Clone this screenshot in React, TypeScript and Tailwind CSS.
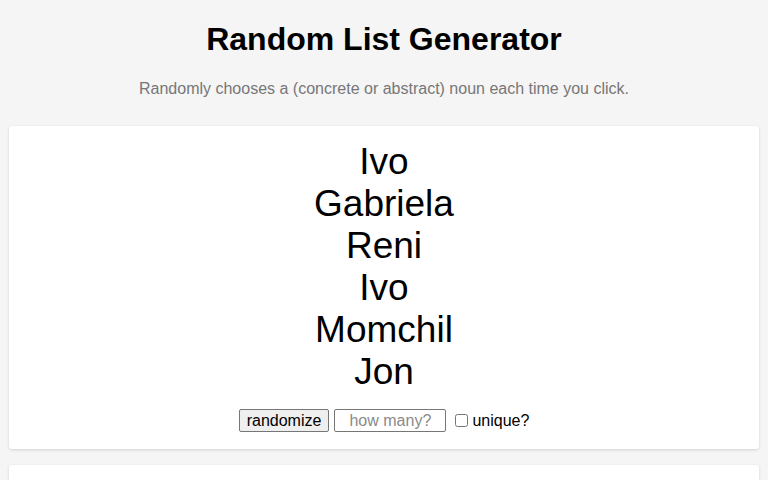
import React from "react";

export default function App() {
  const names = ["Ivo", "Gabriela", "Reni", "Ivo", "Momchil", "Jon"];
  return (
    <div className="h-[480px] overflow-hidden bg-[#f5f5f5] font-['Liberation_Sans',Arial,sans-serif] text-black">
      <h1 className="pt-[21px] text-center text-[32px] leading-[37px] font-bold">Random List Generator</h1>
      <p className="mt-[22px] text-center text-[16px] leading-[18px] text-[#777777]">
        Randomly chooses a (concrete or abstract) noun each time you click.
      </p>
      <div className="mx-[9px] mt-[28px] flex flex-col items-center rounded-[3px] bg-white pt-[15px] pb-[17px] shadow-[0_1px_3px_rgba(0,0,0,0.15)]">
        <div className="flex flex-col items-center">
          {names.map((n, i) => (
            <div key={i} className="text-[37px] leading-[42px]">
              {n}
            </div>
          ))}
        </div>
        <div className="mt-[16px] flex items-center text-[16px]">
          <button className="h-[23px] rounded-[2px] border border-[#767676] bg-[#efefef] px-[7px] text-[16px] leading-[18px] text-black">
            randomize
          </button>
          <input
            type="text"
            placeholder="how many?"
            className="ml-[5px] h-[23px] w-[112px] rounded-[2px] border border-[#767676] bg-white px-[2px] text-center text-[16px] placeholder:text-[#8a8a8a]"
          />
          <input type="checkbox" className="ml-[9px] h-[13px] w-[13px]" />
          <span className="ml-[4px] leading-[18px]">unique?</span>
        </div>
      </div>
      <div className="mx-[9px] mt-[16px] h-[60px] rounded-[3px] bg-white shadow-[0_1px_3px_rgba(0,0,0,0.15)]" />
    </div>
  );
}
